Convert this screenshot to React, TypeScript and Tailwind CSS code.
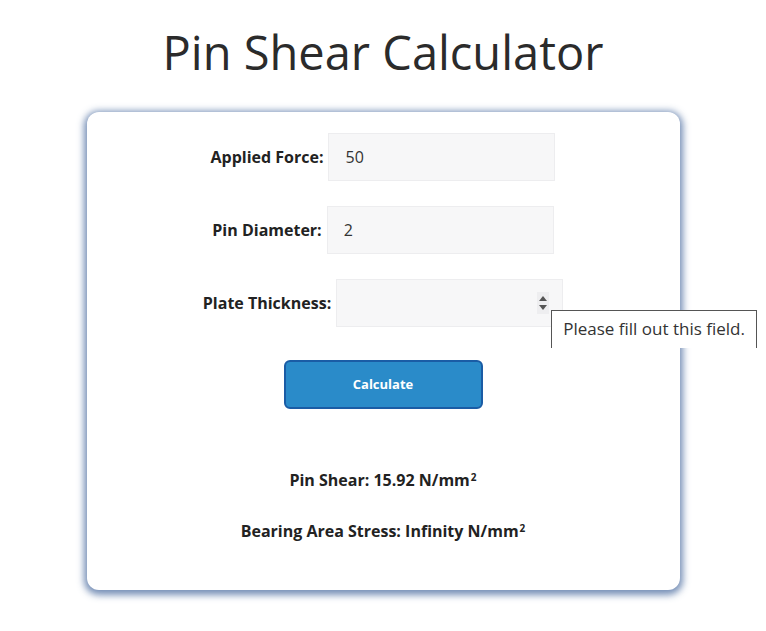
export default function App() {
  const rows = [
    { label: "Applied Force:", value: "50", spin: false },
    { label: "Pin Diameter:", value: "2", spin: false },
    { label: "Plate Thickness:", value: "", spin: true },
  ];

  return (
    <div
      className="min-h-[631px] bg-white text-[#212529] pt-[22px]"
      style={{ fontFamily: '"Open Sans", "Noto Sans", sans-serif' }}
    >
      <h1 className="text-center text-[47px] leading-[60px] font-normal text-[#2b2b2b]">
        Pin Shear Calculator
      </h1>

      <div className="mx-auto mt-[30px] w-[593px] h-[478px] bg-white rounded-xl shadow-[0_2px_7px_3px_rgba(95,125,170,0.85)] pt-[21px] flex flex-col items-center">
        {rows.map((r) => (
          <div key={r.label} className="flex items-center gap-[5px] h-[48px] mb-[25px]">
            <label className="text-[16px] font-bold text-[#222]">{r.label}</label>
            <div className="relative">
              <input
                readOnly
                value={r.value}
                className="w-[227px] h-[48px] bg-[#f7f7f8] border border-[#ededef] px-[16px] text-[16px] text-[#333] outline-none"
              />
              {r.spin && (
                <div className="absolute right-[14px] top-[13px] w-[12px] h-[22px] bg-[#eeeef0] flex flex-col items-center justify-center gap-[4px]">
                  <svg width="8" height="5" viewBox="0 0 8 5">
                    <path d="M4 0 L8 5 L0 5 Z" fill="#555" />
                  </svg>
                  <svg width="8" height="5" viewBox="0 0 8 5">
                    <path d="M0 0 L8 0 L4 5 Z" fill="#555" />
                  </svg>
                </div>
              )}
              {r.spin && (
                <div className="absolute left-[215px] top-[31px] w-[206px] h-[38px] bg-white border-t border-l border-r border-[#555] pl-[11px] pt-[6px] text-[17px] leading-[24px] text-[#333] whitespace-nowrap z-10">
                  Please fill out this field.
                </div>
              )}
            </div>
          </div>
        ))}

        <button className="mt-[8px] w-[199px] h-[49px] bg-[#2a8bc9] border-2 border-[#1a5ca5] rounded-md text-white text-[13px] font-bold">
          Calculate
        </button>

        <p className="mt-[59px] text-[16px] font-bold text-[#222]">
          Pin Shear: 15.92 N/mm<sup className="text-[10px] ml-[1px]">2</sup>
        </p>
        <p className="mt-[27px] text-[16px] font-bold text-[#222]">
          Bearing Area Stress: Infinity N/mm<sup className="text-[10px] ml-[1px]">2</sup>
        </p>
      </div>
    </div>
  );
}
